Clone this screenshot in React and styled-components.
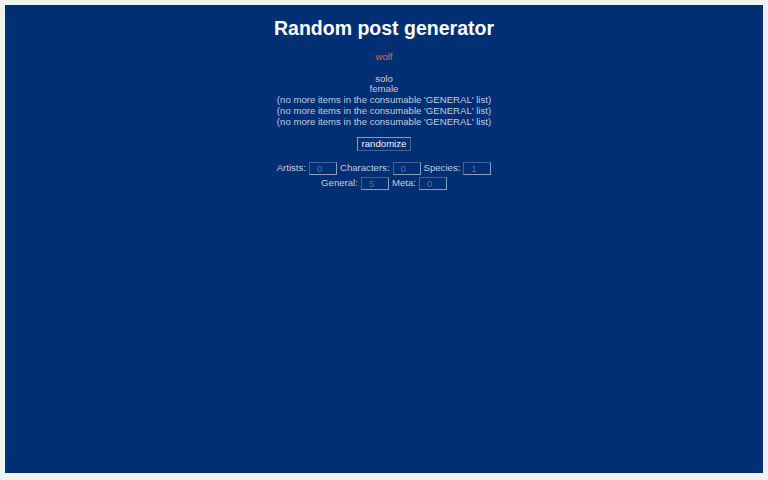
import React, { useState } from 'react';
import styled, { createGlobalStyle } from 'styled-components';

const GlobalStyle = createGlobalStyle`
  html, body {
    margin: 0;
    padding: 0;
    background: #f1f2f4;
  }
  body {
    font-family: "Liberation Sans", Arial, sans-serif;
  }
`;

const Page = styled.div`
  padding: 5px 5px 7px 5px;
`;

const Panel = styled.main`
  background: #002f74;
  height: 468px;
  box-sizing: border-box;
  padding-top: 11px;
  text-align: center;
  color: #c4cbdc;
  font-size: 9.6px;
  line-height: 10.75px;
`;

const Title = styled.h1`
  margin: 0 0 12px;
  font-size: 19.5px;
  line-height: 24px;
  font-weight: bold;
  color: #ffffff;
`;

const Output = styled.div`
  margin-bottom: 10px;
`;

const Line = styled.div`
  min-height: 10.75px;
  color: ${p => (p.$accent ? '#e0683a' : 'inherit')};
`;

const RandomButton = styled.button`
  font-family: inherit;
  font-size: 9.6px;
  line-height: 10px;
  color: #eef1f6;
  background: #002f74;
  border: 1px solid #8f9cb8;
  border-right-color: #4a5f8c;
  border-bottom-color: #4a5f8c;
  padding: 1px 4px;
  height: 14px;
  margin: 0 0 11px;
  cursor: pointer;
`;

const Controls = styled.div`
  display: flex;
  flex-direction: column;
  align-items: center;
  gap: 2px;
`;

const Row = styled.div`
  display: flex;
  align-items: center;
  justify-content: center;
  gap: 3px;
`;

const Field = styled.label`
  display: flex;
  align-items: center;
  gap: 3px;
`;

const Count = styled.input`
  width: 28px;
  height: 13px;
  box-sizing: border-box;
  padding: 0 0 0 7px;
  font-family: inherit;
  font-size: 9.6px;
  color: #5a6f9c;
  background: #002f74;
  border: 1px solid #4a5f8c;
  border-right-color: #8f9cb8;
  border-bottom-color: #8f9cb8;
  outline: none;
`;

const lines = [
  { text: 'wolf', accent: true },
  { text: '' },
  { text: 'solo' },
  { text: 'female' },
  { text: "(no more items in the consumable 'GENERAL' list)" },
  { text: "(no more items in the consumable 'GENERAL' list)" },
  { text: "(no more items in the consumable 'GENERAL' list)" },
];

export default function App() {
  const [counts, setCounts] = useState({
    Artists: 0,
    Characters: 0,
    Species: 1,
    General: 5,
    Meta: 0,
  });

  const field = name => (
    <Field key={name}>
      {name}:
      <Count
        value={counts[name]}
        onChange={e => setCounts({ ...counts, [name]: e.target.value })}
      />
    </Field>
  );

  return (
    <Page>
      <GlobalStyle />
      <Panel>
        <Title>Random post generator</Title>
        <Output>
          {lines.map((l, i) => (
            <Line key={i} $accent={l.accent}>{l.text}</Line>
          ))}
        </Output>
        <RandomButton>randomize</RandomButton>
        <Controls>
          <Row>{['Artists', 'Characters', 'Species'].map(field)}</Row>
          <Row>{['General', 'Meta'].map(field)}</Row>
        </Controls>
      </Panel>
    </Page>
  );
}
